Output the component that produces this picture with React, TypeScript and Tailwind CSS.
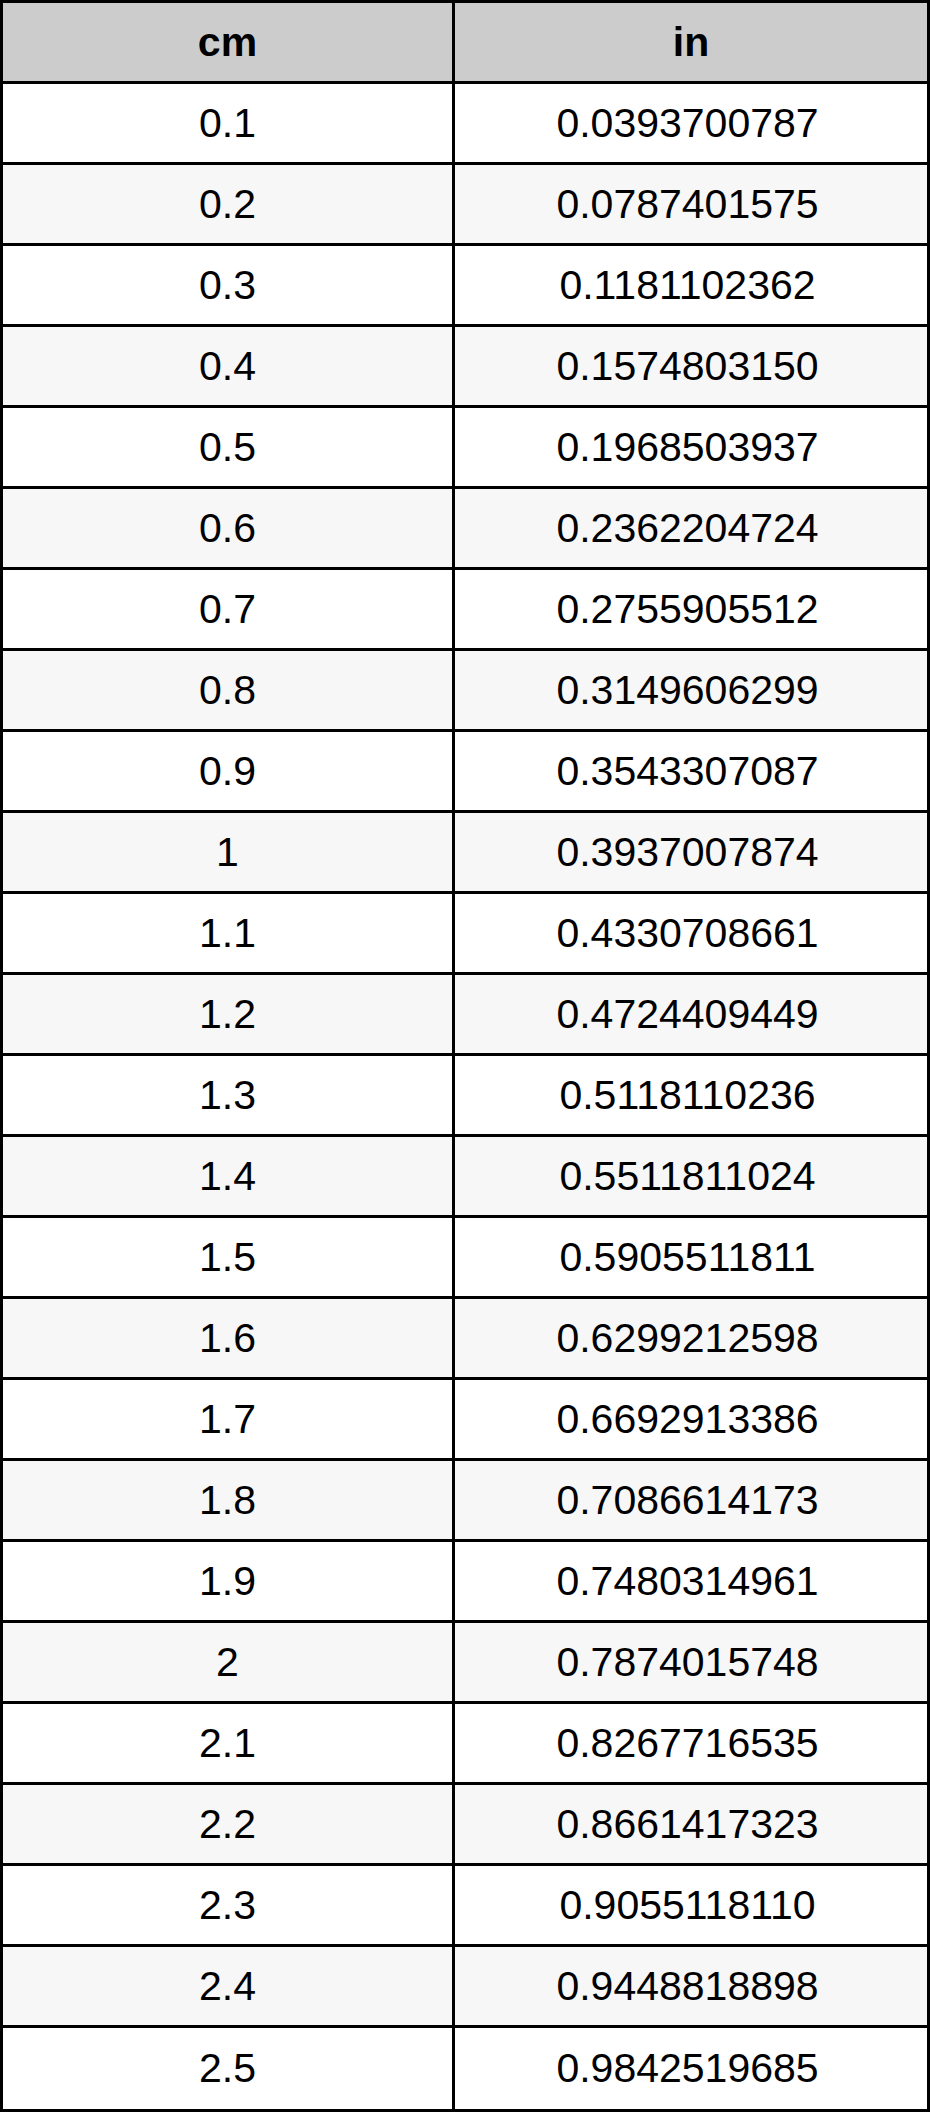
import React from "react";

const rows: [string, string][] = [
  ["0.1", "0.0393700787"],
  ["0.2", "0.0787401575"],
  ["0.3", "0.1181102362"],
  ["0.4", "0.1574803150"],
  ["0.5", "0.1968503937"],
  ["0.6", "0.2362204724"],
  ["0.7", "0.2755905512"],
  ["0.8", "0.3149606299"],
  ["0.9", "0.3543307087"],
  ["1", "0.3937007874"],
  ["1.1", "0.4330708661"],
  ["1.2", "0.4724409449"],
  ["1.3", "0.5118110236"],
  ["1.4", "0.5511811024"],
  ["1.5", "0.5905511811"],
  ["1.6", "0.6299212598"],
  ["1.7", "0.6692913386"],
  ["1.8", "0.7086614173"],
  ["1.9", "0.7480314961"],
  ["2", "0.7874015748"],
  ["2.1", "0.8267716535"],
  ["2.2", "0.8661417323"],
  ["2.3", "0.9055118110"],
  ["2.4", "0.9448818898"],
  ["2.5", "0.9842519685"],
];

export default function App() {
  return (
    <div className="bg-white min-h-[2115px]">
      <div
        className="w-[930px] border-[3px] border-black text-black text-[41px] leading-none"
        style={{ fontFamily: '"Liberation Sans", Arial, sans-serif' }}
      >
        <div className="flex h-[81px] border-b-[3px] border-black bg-[#cccccc] font-bold">
          <div className="w-[452px] border-r-[3px] border-black flex items-center justify-center">cm</div>
          <div className="flex-1 flex items-center justify-center">in</div>
        </div>
        {rows.map(([a, b], i) => (
          <div
            key={a}
            className={
              "flex h-[81px] border-black " +
              (i < rows.length - 1 ? "border-b-[3px] " : "h-[78px] ") +
              (i % 2 === 1 ? "bg-[#f7f7f7]" : "bg-white")
            }
          >
            <div className="w-[452px] border-r-[3px] border-black flex items-center justify-center">{a}</div>
            <div className="flex-1 flex items-center justify-center pr-[7px]">{b}</div>
          </div>
        ))}
      </div>
    </div>
  );
}
